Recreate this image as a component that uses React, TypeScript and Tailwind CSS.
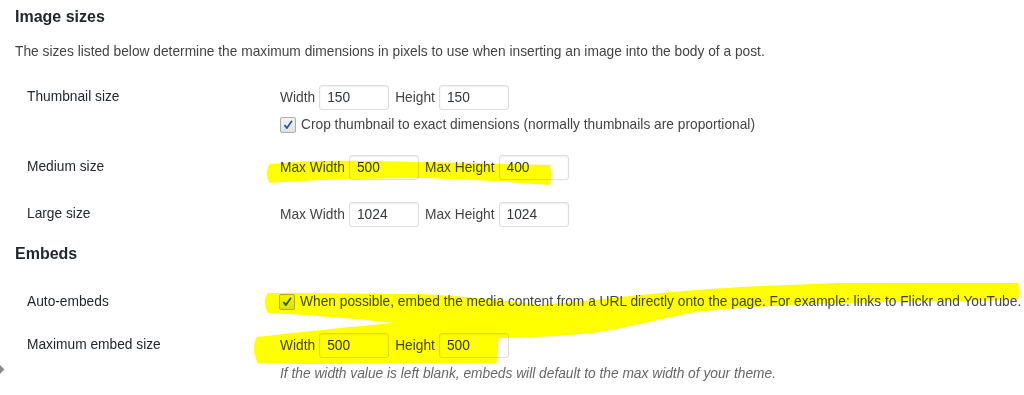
import React from "react";

const font = "font-['Liberation_Sans',Arial,sans-serif]";

const SizeInput: React.FC<{ value: string }> = ({ value }) => (
  <input
    readOnly
    value={value}
    className="w-[70px] h-[25px] rounded-[3px] border border-[#ddd] bg-white px-[7px] text-[13.75px] text-[#32373c] shadow-[inset_0_1px_2px_rgba(0,0,0,0.07)] outline-none"
  />
);

const Check: React.FC<{ checked?: boolean }> = ({ checked }) => (
  <span className="flex h-[16px] w-[16px] shrink-0 items-center justify-center rounded-[2px] border border-[#a9adb1] bg-gradient-to-b from-[#f4f4f4] to-[#e1e1e1]">
    {checked && (
      <svg viewBox="0 0 16 16" className="h-[14px] w-[14px]">
        <path d="M3.2 8.6 L4.6 7.3 L6.7 9.6 L11.8 2.6 L13.3 3.6 L7.2 12.6 L6.2 12.6 Z" fill="#1e5aa8" />
      </svg>
    )}
  </span>
);

const Pair: React.FC<{ a: string; av: string; b: string; bv: string }> = ({ a, av, b, bv }) => (
  <div className="flex h-[25px] items-center">
    <span className="mr-[4px] pt-[1px]">{a}</span>
    <SizeInput value={av} />
    <span className="ml-[6px] mr-[4px] pt-[1px]">{b}</span>
    <SizeInput value={bv} />
  </div>
);

const Row: React.FC<{ label: string; className?: string; children: React.ReactNode }> = ({
  label,
  className,
  children,
}) => (
  <div className={`grid grid-cols-[253px_1fr] ${className ?? ""}`}>
    <div className="flex h-[25px] items-center text-[#23282d]">{label}</div>
    <div>{children}</div>
  </div>
);

export default function App() {
  return (
    <div className={`relative h-[395px] w-[1024px] overflow-hidden bg-white text-[13.75px] text-[#444] ${font}`}>
      <div className="pl-[15px]">
        <h2 className="flex h-[34px] items-center text-[16px] font-bold text-[#23282d]">Image sizes</h2>
        <p className="flex h-[36px] items-center">
          The sizes listed below determine the maximum dimensions in pixels to use when inserting an image into the body of a post.
        </p>

        <div className="pl-[12px]">
          <Row label="Thumbnail size" className="mt-[15px]">
            <Pair a="Width" av="150" b="Height" bv="150" />
            <label className="mt-[5px] flex h-[20px] items-center gap-[5px]">
              <Check checked />
              <span>Crop thumbnail to exact dimensions (normally thumbnails are proportional)</span>
            </label>
          </Row>

          <Row label="Medium size" className="mt-[20px]">
            <Pair a="Max Width" av="500" b="Max Height" bv="400" />
          </Row>

          <Row label="Large size" className="mt-[22px]">
            <Pair a="Max Width" av="1024" b="Max Height" bv="1024" />
          </Row>
        </div>

        <h2 className="mt-[10px] flex h-[34px] items-center text-[16px] font-bold text-[#23282d]">Embeds</h2>

        <div className="pl-[12px]">
          <div className="mt-[21px] grid grid-cols-[252px_1fr]">
            <div className="flex h-[20px] items-center text-[#23282d]">Auto-embeds</div>
            <label className="flex h-[20px] items-center gap-[5px] whitespace-nowrap">
              <Check checked />
              <span>When possible, embed the media content from a URL directly onto the page. For example: links to Flickr and YouTube.</span>
            </label>
          </div>

          <Row label="Maximum embed size" className="mt-[21px]">
            <Pair a="Width" av="500" b="Height" bv="500" />
            <p className="mt-[6px] flex h-[20px] items-center italic text-[#666]">
              If the width value is left blank, embeds will default to the max width of your theme.
            </p>
          </Row>
        </div>
      </div>

      {/* marker highlights drawn over the screenshot */}
      <svg
        className="pointer-events-none absolute left-0 top-0 h-[395px] w-[1024px] mix-blend-multiply"
        viewBox="0 0 1024 395"
      >
        <path
          fill="#ffff00"
          d="M270 164 C300 161 330 160 360 161 C420 162 480 163 550 165 L552 175 L550 185 C500 181 460 179 420 178 C380 178 330 180 300 181 L270 183 C266 178 266 169 270 164 Z"
        />
        <path
          fill="#ffff00"
          d="M268 293 L420 294 C460 296 500 300 540 305 C580 302 610 298 640 295 C680 291 720 288 760 286 L840 283 L1018 283 L1020 292 L1018 300 L840 303 C780 305 720 309 690 313 C660 319 640 325 600 332 C570 336 540 337 500 338 C497 345 498 355 497 363 L300 364 L258 363 C253 355 253 342 257 337 C300 332 350 327 393 323 C350 318 310 315 268 313 C264 306 264 298 268 293 Z"
        />
      </svg>

      <div className="absolute -left-[4px] top-[366px] h-[7px] w-[7px] rotate-45 bg-[#8a8a8a]" />
    </div>
  );
}
